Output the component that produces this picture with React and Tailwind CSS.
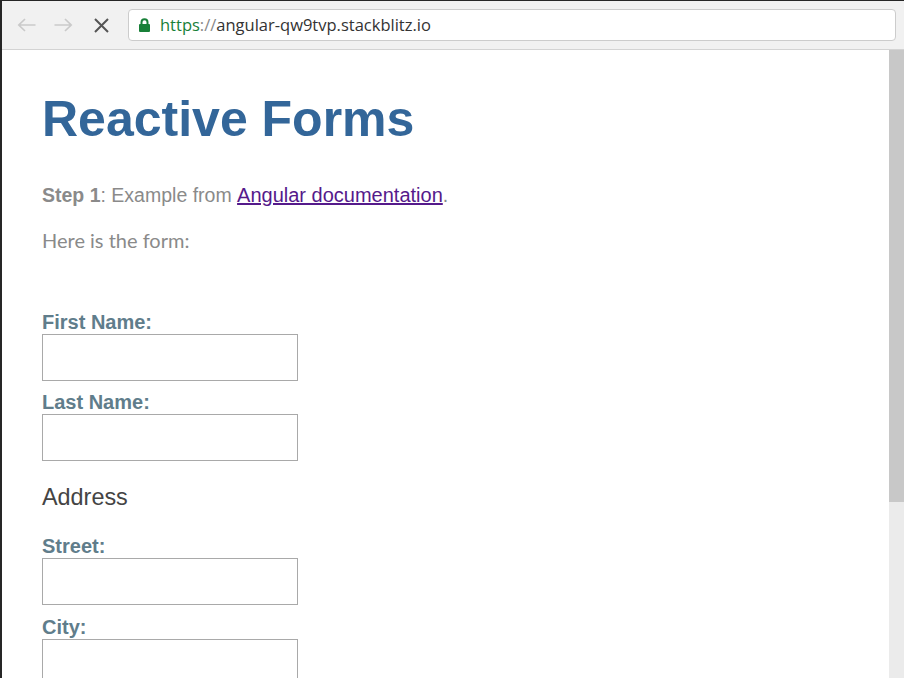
const labelCls = "block text-[20px] leading-[23px] font-bold text-[#607d8b]";
const inputCls = "block w-[256px] h-[47px] border border-[#a9a9a9] bg-white";

function Field({ label, className = '' }) {
  return (
    <div className={className}>
      <label className={labelCls}>{label}</label>
      <input type="text" className={inputCls} />
    </div>
  );
}

function LockIcon() {
  return (
    <svg width="13" height="14" viewBox="0 0 13 14">
      <path d="M3.5 6V4.2a3 3 0 0 1 6 0V6" fill="none" stroke="#188038" strokeWidth="2" />
      <rect x="1" y="6" width="11" height="8" rx="1" fill="#188038" />
    </svg>
  );
}

function NavArrow({ dir, color }) {
  return (
    <svg width="19" height="14" viewBox="0 0 19 14" className={dir === 'right' ? 'rotate-180' : ''}>
      <path d="M18.5 7H1.8M8 1L1.8 7L8 13" fill="none" stroke={color} strokeWidth="1.7" />
    </svg>
  );
}

function StopIcon() {
  return (
    <svg width="15" height="15" viewBox="0 0 15 15">
      <path d="M1 1L14 14M14 1L1 14" fill="none" stroke="#555" strokeWidth="2" />
    </svg>
  );
}

export default function App() {
  return (
    <div
      className="w-[904px] h-[678px] overflow-hidden flex flex-col border-l-2 border-t border-[#262626] bg-white"
      style={{ fontFamily: '"Liberation Sans", Arial, sans-serif' }}
    >
      {/* browser toolbar */}
      <div className="h-[49px] shrink-0 bg-[#f1f1f1] border-b border-[#d3d3d3] flex items-center">
        <div className="w-[126px] flex items-center pl-[15px]">
          <NavArrow dir="left" color="#cacaca" />
          <span className="ml-[18px]"><NavArrow dir="right" color="#cacaca" /></span>
          <span className="ml-[21px] flex"><StopIcon /></span>
        </div>
        <div className="w-[768px] h-[32px] bg-white border border-[#cccccc] rounded-[4px] flex items-center pl-[9px] gap-[9px]">
          <LockIcon />
          <span className="text-[16.5px] text-[#333]" style={{ fontFamily: '"Open Sans", "Noto Sans", sans-serif' }}>
            <span className="text-[#188038]">https</span>
            <span className="text-[#888]">://</span>
            angular-qw9tvp.stackblitz.io
          </span>
        </div>
      </div>

      {/* page + scrollbar */}
      <div className="flex flex-1 min-h-0">
        <div className="flex-1 bg-white pl-[40px] pt-[41px] overflow-hidden">
          <h1 className="text-[50px] leading-[56px] font-bold text-[#336699]">Reactive Forms</h1>
          <p className="mt-[36px] text-[19.5px] leading-[24px] text-[#8a8a8a]">
            <b className="font-bold">Step 1</b>: Example from{' '}
            <a href="#" className="text-[20px] text-[#551a8b] underline">Angular documentation</a>.
          </p>
          <p
            className="mt-[21px] text-[20px] leading-[24px] text-[#8a8a8a]"
            style={{ fontFamily: 'Lato, sans-serif' }}
          >
            Here is the form:
          </p>

          <form className="mt-[59px]">
            <Field label="First Name:" />
            <Field label="Last Name:" className="mt-[10px]" />
            <h3 className="mt-[23px] text-[23.4px] leading-[27px] text-[#444]">Address</h3>
            <Field label="Street:" className="mt-[24px]" />
            <Field label="City:" className="mt-[11px]" />
          </form>
        </div>
        <div className="w-[15px] shrink-0 bg-[#ebebeb]">
          <div className="h-[452px] bg-[#c8c8c8]" />
        </div>
      </div>
    </div>
  );
}
